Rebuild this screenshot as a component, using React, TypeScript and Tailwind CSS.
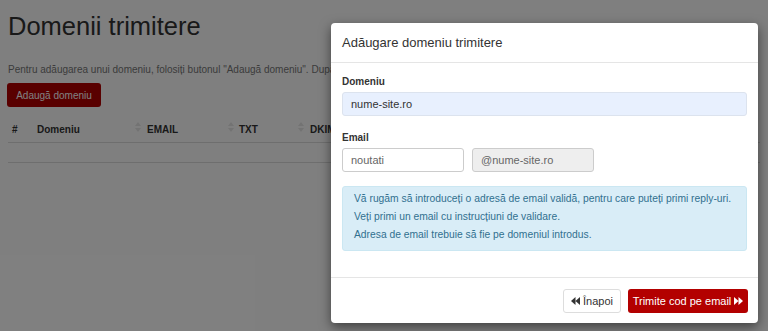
function SortIcon() {
  return (
    <svg width="6" height="10" viewBox="0 0 6 10" className="text-[#e6e6e6]">
      <path d="M3 0 L6 4 L0 4 Z" fill="currentColor" />
      <path d="M3 10 L6 6 L0 6 Z" fill="currentColor" />
    </svg>
  );
}

function Backward() {
  return (
    <svg width="9" height="8" viewBox="0 0 9 8">
      <path d="M4.5 0 L4.5 8 L0 4 Z M9 0 L9 8 L4.5 4 Z" fill="currentColor" />
    </svg>
  );
}

function Forward() {
  return (
    <svg width="9" height="8" viewBox="0 0 9 8">
      <path d="M0 0 L0 8 L4.5 4 Z M4.5 0 L4.5 8 L9 4 Z" fill="currentColor" />
    </svg>
  );
}

function Page() {
  return (
    <div className="px-[8px] pt-[8px] text-[#333]">
      <h1 className="text-[25.5px] leading-[36px] text-[#333]">Domenii trimitere</h1>
      <p className="mt-[19px] text-[10px] leading-[14px] text-[#777] whitespace-nowrap">
        Pentru adăugarea unui domeniu, folosiți butonul "Adaugă domeniu". După adăugare, configurați înregistrările DNS afișate în tabel.
      </p>
      <button className="mt-[6px] -ml-px h-[24px] w-[94px] rounded-[3px] bg-[#b30000] text-white text-[10px]">
        Adaugă domeniu
      </button>
      <div className="mt-[10px] flex items-center h-[26px] border-b border-[#ddd] text-[10px] font-bold">
        <div className="w-[29px] pl-[4px]">#</div>
        <div className="w-[104px] flex justify-between">
          <span>Domeniu</span>
          <SortIcon />
        </div>
        <div className="w-[93px] flex justify-between pl-[6px]">
          <span>EMAIL</span>
          <SortIcon />
        </div>
        <div className="w-[70px] flex justify-between pl-[5px]">
          <span>TXT</span>
          <SortIcon />
        </div>
        <div className="pl-[6px]">DKIM</div>
      </div>
      <div className="h-[20px] border-b border-[#ddd]" />
    </div>
  );
}

export default function App() {
  return (
    <div
      className="relative w-[768px] h-[331px] overflow-hidden bg-white"
      style={{ fontFamily: '"Liberation Sans", Arial, sans-serif' }}
    >
      <Page />
      <div className="absolute inset-0 bg-black/50" />
      <div className="absolute left-[331px] top-[23px] w-[427px] h-[300px] bg-white rounded-[4px] shadow-[0_4px_12px_rgba(0,0,0,0.5)] flex flex-col">
        <div className="h-[40px] flex items-center px-[11px] border-b border-[#e5e5e5]">
          <span className="text-[13px] text-[#333]">Adăugare domeniu trimitere</span>
        </div>
        <div className="flex-1 px-[11px] pt-[10px]">
          <label className="block text-[10px] leading-[17px] font-bold text-[#333]">Domeniu</label>
          <div className="mt-[2px] h-[24px] flex items-center px-[8px] bg-[#e8f0fe] border border-[#dce3ee] rounded-[3px] text-[11px] text-[#333]">
            nume-site.ro
          </div>
          <label className="block mt-[13px] text-[10px] leading-[17px] font-bold text-[#333]">Email</label>
          <div className="mt-[2px] flex gap-[8px]">
            <div className="w-[122px] h-[24px] flex items-center px-[8px] border border-[#ccc] rounded-[3px] text-[11px] text-[#666]">
              noutati
            </div>
            <div className="w-[122px] h-[24px] flex items-center px-[8px] bg-[#eee] border border-[#ccc] rounded-[3px] text-[11px] text-[#666]">
              @nume-site.ro
            </div>
          </div>
          <div className="mt-[14px] h-[65px] px-[11px] pt-[3px] bg-[#d9edf7] border border-[#cbe7f2] rounded-[3px] text-[10.3px] leading-[18px] text-[#31708f] whitespace-nowrap">
            <div>Vă rugăm să introduceți o adresă de email validă, pentru care puteți primi reply-uri.</div>
            <div>Veți primi un email cu instrucțiuni de validare.</div>
            <div>Adresa de email trebuie să fie pe domeniul introdus.</div>
          </div>
        </div>
        <div className="h-[46px] border-t border-[#e5e5e5] flex items-start justify-end gap-[7px] pt-[11px] px-[10px]">
          <button className="h-[24px] w-[58px] flex items-center justify-center gap-[3px] border border-[#ddd] rounded-[3px] bg-white text-[11px] text-[#333]">
            <Backward />
            Înapoi
          </button>
          <button className="h-[24px] w-[120px] flex items-center justify-center gap-[3px] rounded-[3px] bg-[#b30000] text-[11px] text-white">
            Trimite cod pe email
            <Forward />
          </button>
        </div>
      </div>
    </div>
  );
}
